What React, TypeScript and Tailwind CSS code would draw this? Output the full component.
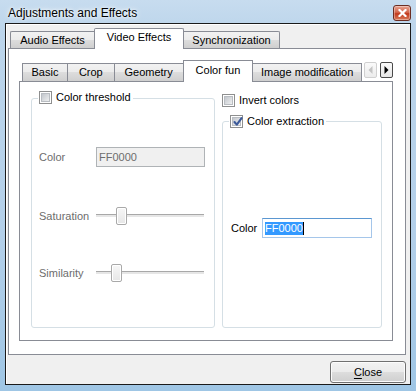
import React from 'react';

const tabBg =
  'bg-[linear-gradient(#f2f2f2,#ebebeb_50%,#dddddd_50%,#cfcfcf)]';

function Check({ checked }: { checked?: boolean }) {
  return (
    <span className="relative block w-[13px] h-[13px] shrink-0 border border-[#8e8f8f] bg-white p-[1px]">
      <span className="block w-full h-full border border-[#b9bdc2] bg-[linear-gradient(135deg,#c3c7cd,#eeeff0)]" />
      {checked && (
        <svg
          className="absolute left-[1px] top-[0px]"
          width="12"
          height="12"
          viewBox="0 0 12 12"
        >
          <path
            d="M2.5 6 L4.8 8.6 L9.6 2.2"
            fill="none"
            stroke="#3c5a9a"
            strokeWidth="2.1"
            strokeLinecap="round"
            strokeLinejoin="round"
          />
        </svg>
      )}
    </span>
  );
}

function Slider({ offset }: { offset: number }) {
  return (
    <div className="relative w-[108px] h-[18px]">
      <div className="absolute left-0 right-0 top-[7px] h-[3px] border-t border-[#a8a8a8] bg-[#e6e6e6]" />
      <div
        className="absolute top-0 w-[11px] h-[18px] rounded-[2px] border border-[#a9a9a9] bg-[linear-gradient(#f7f7f7,#e6e6e6)] shadow-[inset_0_0_0_1px_#fff]"
        style={{ left: offset }}
      />
    </div>
  );
}

export default function App() {
  return (
    <div className="w-[416px] h-[391px] flex flex-col overflow-hidden bg-[linear-gradient(180deg,#c7dcef_0%,#bcd5eb_8%,#b3cfe9_60%,#9fc6e5_100%)] font-['Liberation_Sans',Arial,sans-serif] text-[11px] text-black">
      {/* Title bar */}
      <div className="h-[23px] flex items-start justify-between pl-[8px] pr-[5px]">
        <span className="mt-[5px] text-[12px] leading-[16px] [text-shadow:0_0_6px_#fff,0_0_3px_#fff]">
          Adjustments and Effects
        </span>
        <div className="mt-[5px] w-[18px] h-[16px] rounded-[3px] border border-[#6b2d22] bg-[linear-gradient(#e8a493,#d3664c_45%,#c2391c_55%,#d77a5a)] flex items-center justify-center shadow-[inset_0_0_0_1px_rgba(255,255,255,0.35)]">
          <svg width="9" height="8" viewBox="0 0 9 8">
            <path
              d="M1.5 1 L7.5 7 M7.5 1 L1.5 7"
              stroke="#fff"
              strokeWidth="2.2"
              strokeLinecap="square"
            />
          </svg>
        </div>
      </div>

      {/* Client area */}
      <div className="mx-[5px] mb-[6px] flex-1 border border-[#1a1a1a] bg-[#f0f0f0] shadow-[inset_1px_1px_0_#ffffff] flex flex-col pt-[4px] pl-[2px] pr-[4px]">
        {/* Outer tabs */}
        <div className="flex items-end h-[20px] pl-[2px] relative z-10">
          <div
            className={`h-[17px] w-[84px] border border-b-0 border-r-0 border-[#898c95] rounded-tl-[2px] ${tabBg} flex items-center justify-center`}
          >
            Audio Effects
          </div>
          <div className="h-[21px] -mb-px w-[90px] border border-b-0 border-[#898c95] rounded-t-[2px] bg-white flex items-center justify-center pb-[3px]">
            Video Effects
          </div>
          <div
            className={`h-[17px] w-[96px] border border-b-0 border-l-0 border-[#898c95] rounded-tr-[2px] ${tabBg} flex items-center justify-center`}
          >
            Synchronization
          </div>
        </div>

        {/* Outer pane */}
        <div className="h-[307px] border border-[#898c95] bg-white pt-[11px] pl-[10px] pr-[12px] pb-[13px] flex flex-col">
          {/* Inner tabs */}
          <div className="flex items-end h-[21px] pl-[3px] relative z-10">
            <div
              className={`h-[18px] w-[45px] border border-b-0 border-r-0 border-[#898c95] ${tabBg} flex items-center justify-center`}
            >
              Basic
            </div>
            <div
              className={`h-[18px] w-[47px] border border-b-0 border-r-0 border-[#898c95] ${tabBg} flex items-center justify-center`}
            >
              Crop
            </div>
            <div
              className={`h-[18px] w-[69px] border border-b-0 border-r-0 border-[#898c95] ${tabBg} flex items-center justify-center`}
            >
              Geometry
            </div>
            <div className="h-[22px] -mb-px w-[71px] border border-b-0 border-[#898c95] bg-white flex items-center justify-center pb-[3px]">
              Color fun
            </div>
            <div
              className={`h-[18px] w-[109px] border border-b-0 border-l-0 border-[#898c95] ${tabBg} flex items-center justify-center overflow-hidden`}
            >
              Image modification
            </div>
            <div className="flex items-start self-start mt-[2px] ml-[2px] gap-[3px]">
              <div className="w-[13px] h-[16px] rounded-[2px] border border-[#d0d0d0] bg-[linear-gradient(#fafafa,#ececec)] flex items-center justify-center">
                <svg width="5" height="8" viewBox="0 0 5 8">
                  <path d="M4.5 0 L0.5 4 L4.5 8 Z" fill="#c4c4c4" />
                </svg>
              </div>
              <div className="w-[13px] h-[16px] rounded-[2px] border border-[#4a4a4a] bg-[linear-gradient(#fafafa,#e6e6e6)] flex items-center justify-center">
                <svg width="5" height="8" viewBox="0 0 5 8">
                  <path d="M0.5 0 L4.5 4 L0.5 8 Z" fill="#000" />
                </svg>
              </div>
            </div>
          </div>

          {/* Inner pane */}
          <div className="flex-1 border border-[#898c95] bg-white flex pt-[12px] pl-[11px] pr-[10px] pb-[12px] gap-[7px]">
            {/* Left column */}
            <div className="w-[184px] pt-[4px] flex flex-col">
              <div className="relative flex-1 border border-[#d5dfe5] rounded-[3px] flex flex-col">
                <div className="absolute left-[6px] top-[-8px] bg-white pr-[2px] pl-[1px] flex items-center gap-[4px] h-[13px]">
                  <Check />
                  <span>Color threshold</span>
                </div>
                <div className="mt-[48px] pl-[7px] h-[20px] flex items-center">
                  <span className="w-[57px] text-[#6d6d6d]">Color</span>
                  <div className="w-[109px] h-[20px] border border-[#afb3b6] bg-[#f0f0f0] flex items-center pl-[2px] text-[#6d6d6d]">
                    FF0000
                  </div>
                </div>
                <div className="mt-[40px] pl-[7px] h-[18px] flex items-center">
                  <span className="w-[57px] text-[#6d6d6d]">Saturation</span>
                  <Slider offset={20} />
                </div>
                <div className="mt-[39px] pl-[7px] h-[18px] flex items-center">
                  <span className="w-[57px] text-[#6d6d6d]">Similarity</span>
                  <Slider offset={15} />
                </div>
              </div>
            </div>

            {/* Right column */}
            <div className="w-[160px] flex flex-col">
              <div className="h-[13px] flex items-center gap-[4px]">
                <Check />
                <span>Invert colors</span>
              </div>
              <div className="relative mt-[14px] flex-1 border border-[#d5dfe5] rounded-[3px] flex flex-col">
                <div className="absolute left-[6px] top-[-7px] bg-white pr-[2px] pl-[1px] flex items-center gap-[4px] h-[13px]">
                  <Check checked />
                  <span>Color extraction</span>
                </div>
                <div className="mt-[96px] pl-[8px] h-[20px] flex items-center">
                  <span className="w-[31px]">Color</span>
                  <div className="w-[110px] h-[20px] border border-[#a5c6ea] border-t-[#5b97d1] bg-white flex items-center pl-[2px]">
                    <span className="bg-[#3399ff] text-white leading-[13px]">FF0000</span>
                    <span className="w-px h-[13px] bg-black" />
                  </div>
                </div>
              </div>
            </div>
          </div>
        </div>

        {/* Close row */}
        <div className="flex justify-end mt-[6px]">
          <div
            className={`w-[76px] h-[22px] rounded-[3px] border border-[#707070] ${tabBg} shadow-[inset_0_0_0_1px_#fcfcfc] flex items-center justify-center`}
          >
            <span>
              <span className="underline underline-offset-[2px]">C</span>lose
            </span>
          </div>
        </div>
      </div>
    </div>
  );
}
